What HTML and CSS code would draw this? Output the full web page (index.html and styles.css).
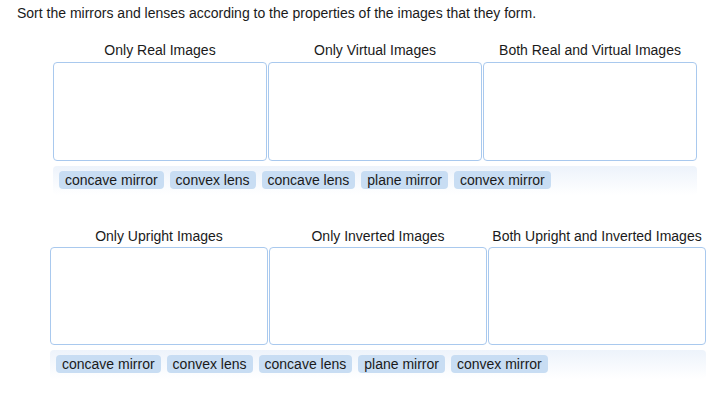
FILE: index.html
```html
<!DOCTYPE html>
<html lang="en">

<head>
	<meta charset="UTF-8" />
	<meta name="viewport" content="width=device-width, initial-scale=1.0" />
	<title>Sorting: mirrors and lenses</title>
	<link rel="stylesheet" href="styles.css">
</head>

<body>
	<div class="question">
		<p class="prompt">Sort the mirrors and lenses according to the properties of the images that they form.</p>

		<!-- real / virtual -->
		<div class="sorter sorter-real">
			<div class="bins">
				<div class="bin">
					<div class="bin-title">Only Real Images</div>
					<div class="bin-drop"></div>
				</div>
				<div class="bin">
					<div class="bin-title">Only Virtual Images</div>
					<div class="bin-drop"></div>
				</div>
				<div class="bin">
					<div class="bin-title">Both Real and Virtual Images</div>
					<div class="bin-drop"></div>
				</div>
			</div>
			<div class="tray">
				<span class="chip">concave mirror</span>
				<span class="chip">convex lens</span>
				<span class="chip">concave lens</span>
				<span class="chip">plane mirror</span>
				<span class="chip">convex mirror</span>
			</div>
		</div>

		<!-- upright / inverted -->
		<div class="sorter sorter-upright">
			<div class="bins">
				<div class="bin">
					<div class="bin-title">Only Upright Images</div>
					<div class="bin-drop"></div>
				</div>
				<div class="bin">
					<div class="bin-title">Only Inverted Images</div>
					<div class="bin-drop"></div>
				</div>
				<div class="bin">
					<div class="bin-title">Both Upright and Inverted Images</div>
					<div class="bin-drop"></div>
				</div>
			</div>
			<div class="tray">
				<span class="chip">concave mirror</span>
				<span class="chip">convex lens</span>
				<span class="chip">concave lens</span>
				<span class="chip">plane mirror</span>
				<span class="chip">convex mirror</span>
			</div>
		</div>
	</div>
</body>

</html>
```

FILE: styles.css
```css
body {
	margin: 0;
	background: #fff;
	color: #1a1a1a;
	font-family: "Liberation Sans", Arial, sans-serif;
}

.question {
	padding: 5px 0 0 17px;
}

.prompt {
	margin: 0;
	font-size: 14px;
	line-height: 16px;
}

.sorter {
	margin-top: 21px;
}

.sorter-real {
	width: 644px;
	margin-left: 36px;
}

.sorter-upright {
	width: 656px;
	margin-left: 33px;
	margin-top: 33px;
}

.bins {
	display: grid;
	grid-template-columns: repeat(3, 1fr);
	column-gap: 1px;
}

.bin-title {
	font-size: 14px;
	line-height: 16px;
	text-align: center;
	white-space: nowrap;
	margin-bottom: 4px;
}

.sorter-upright .bin-title {
	margin-bottom: 3px;
}

.bin-drop {
	height: 97px;
	border: 1px solid #a9c9ee;
	border-radius: 4px;
	background: #fff;
}

.sorter-upright .bin-drop {
	height: 96px;
}

/* chips waiting to be sorted */
.tray {
	display: flex;
	gap: 6px;
	margin-top: 5px;
	padding: 5px 6px 6px;
	border-radius: 4px;
	background: linear-gradient(#edf3fb, #fff);
}

.chip {
	display: inline-block;
	padding: 1px 6px;
	font-size: 14px;
	line-height: 16px;
	white-space: nowrap;
	background: #c8ddf3;
	border-radius: 4px;
	color: #1a1a1a;
}
```
